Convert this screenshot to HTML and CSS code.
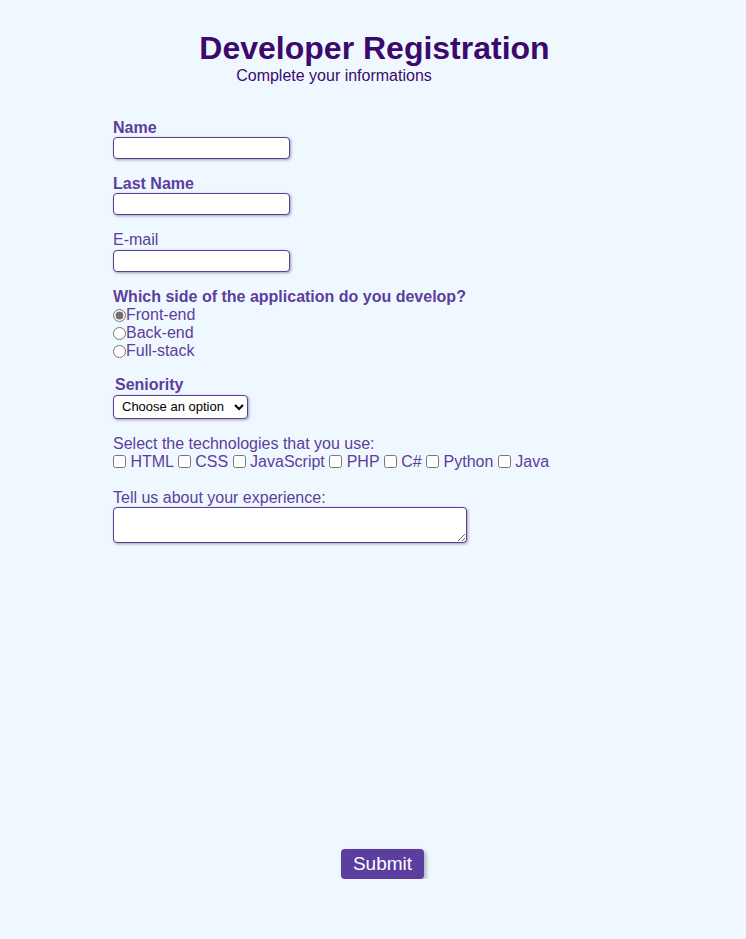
FILE: index.html
```html
<!DOCTYPE html>
<html lang="en">
<head>
<meta charset="utf-8">
<title>Developer Registration</title>
<link rel="stylesheet" href="styles.css">
</head>
<body>
<header class="header">
  <h1 class="title">Developer Registration</h1>
  <p class="subtitle">Complete your informations</p>
</header>
<form class="form">
  <div class="field">
    <label class="label bold" for="name">Name</label>
    <input class="text-input" id="name" type="text">
  </div>
  <div class="field">
    <label class="label bold" for="last">Last Name</label>
    <input class="text-input" id="last" type="text">
  </div>
  <div class="field">
    <label class="label" for="email">E-mail</label>
    <input class="text-input" id="email" type="email">
  </div>
  <div class="field">
    <span class="label bold">Which side of the application do you develop?</span>
    <label class="radio-line"><input class="radio" type="radio" name="side" checked>Front-end</label>
    <label class="radio-line"><input class="radio" type="radio" name="side">Back-end</label>
    <label class="radio-line"><input class="radio" type="radio" name="side">Full-stack</label>
  </div>
  <div class="field">
    <label class="label bold indent" for="seniority">Seniority</label>
    <select class="select" id="seniority">
      <option>Choose an option</option>
      <option>Junior</option>
      <option>Mid-level</option>
      <option>Senior</option>
    </select>
  </div>
  <div class="field">
    <span class="label">Select the technologies that you use:</span>
    <div class="checks"><input class="check" type="checkbox"> HTML <input class="check" type="checkbox"> CSS <input class="check" type="checkbox"> JavaScript <input class="check" type="checkbox"> PHP <input class="check" type="checkbox"> C# <input class="check" type="checkbox"> Python <input class="check" type="checkbox"> Java</div>
  </div>
  <div class="field">
    <label class="label" for="exp">Tell us about your experience:</label>
    <textarea class="textarea" id="exp"></textarea>
  </div>
  <div class="actions">
    <button class="submit" type="submit">Submit</button>
  </div>
</form>
</body>
</html>
```
FILE: styles.css
```css
html, body {
  margin: 0;
  padding: 0;
  background: #f0f8ff;
}
body {
  font-family: "Liberation Sans", Arial, sans-serif;
  color: #5b3e9e;
  font-size: 16px;
}
.header {
  display: flex;
  flex-direction: column;
  align-items: center;
  padding-top: 30px;
}
.title {
  margin: 0;
  font-size: 32px;
  line-height: 37px;
  font-weight: bold;
  color: #3c096c;
  padding-left: 3px;
}
.subtitle {
  margin: 0;
  font-size: 16px;
  line-height: 18px;
  color: #3c096c;
  padding-right: 78px;
}
.form {
  padding: 33.6px 0 0 113px;
  display: flex;
  flex-direction: column;
}
.field {
  display: flex;
  flex-direction: column;
  align-items: flex-start;
  margin-bottom: 16px;
}
.label {
  font-size: 16px;
  line-height: 18.4px;
}
.bold {
  font-weight: bold;
}
.indent {
  padding-left: 2px;
}
.text-input {
  box-sizing: border-box;
  width: 177px;
  height: 22px;
  margin: 0;
  border: 1px solid #5b3e9e;
  border-radius: 4px;
  background: #fff;
  box-shadow: 1px 1px 3px rgba(60, 40, 90, 0.45);
  outline: none;
}
.radio-line {
  display: flex;
  align-items: center;
  line-height: 18px;
  font-size: 16px;
}
.radio {
  margin: 0;
  width: 13px;
  height: 13px;
  accent-color: #707070;
}
.select {
  box-sizing: border-box;
  width: 135px;
  height: 24px;
  margin: 0;
  font-family: "Liberation Sans", Arial, sans-serif;
  font-size: 13px;
  color: #000;
  background: #fff;
  border: 1px solid #5b3e9e;
  border-radius: 4px;
  box-shadow: 1px 1px 3px rgba(60, 40, 90, 0.45);
  padding: 0 2px 0 4px;
}
.checks {
  line-height: 18px;
  white-space: nowrap;
  margin-bottom: 2px;
}
.check {
  margin: 0;
  width: 13px;
  height: 13px;
  vertical-align: -1px;
  accent-color: #707070;
}
.textarea {
  box-sizing: border-box;
  width: 354px;
  height: 36px;
  margin: 0;
  border: 1px solid #5b3e9e;
  border-radius: 4px;
  background: #fff;
  box-shadow: 1px 1px 3px rgba(60, 40, 90, 0.45);
  resize: both;
}
.actions {
  display: flex;
  padding-left: 228px;
  margin-top: 290px;
}
.submit {
  box-sizing: border-box;
  width: 83px;
  height: 30px;
  background: #5b3e9e;
  color: #fff;
  border: none;
  border-radius: 4px;
  font-family: "Liberation Sans", Arial, sans-serif;
  font-size: 19px;
  padding: 0;
  box-shadow: 2px 2px 4px rgba(40, 30, 70, 0.35);
}
```
